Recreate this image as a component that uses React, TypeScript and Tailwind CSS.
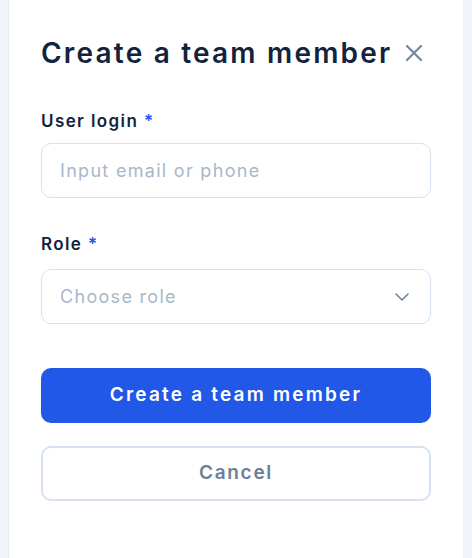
import React from "react";

export default function App() {
  return (
    <div className="w-[472px] h-[558px] bg-[#f1f4f8] flex" style={{ fontFamily: "Inter, 'Noto Sans', sans-serif" }}>
      <div className="w-[8px] shrink-0 bg-[#f1f4f8]" />
      <div className="w-[455px] h-full bg-white border-l border-[#e3ebf7] flex flex-col px-[32px] pt-[34px]">
        <div className="flex items-center justify-between h-[38px]">
          <h1 className="text-[28px] leading-[38px] font-semibold text-[#13233c] tracking-[2.2px]">Create a team member</h1>
          <button className="w-[24px] h-[24px] flex items-center justify-center mr-[5px]">
            <svg width="18" height="18" viewBox="0 0 18 18" fill="none" stroke="#7188a3" strokeWidth="2.2" strokeLinecap="round">
              <path d="M2 2L16 16M16 2L2 16" />
            </svg>
          </button>
        </div>
        <label className="mt-[37px] text-[17px] leading-[24px] font-semibold text-[#13233c] tracking-[1.4px]">
          User login <span className="text-[#2158e8]">*</span>
        </label>
        <div className="mt-[10px] h-[55px] rounded-[10px] border border-[#d6e2ef] flex items-center px-[18px]">
          <span className="text-[18px] text-[#a7b8c9] tracking-[1.3px]">Input email or phone</span>
        </div>
        <label className="mt-[34px] text-[17px] leading-[24px] font-semibold text-[#13233c] tracking-[1.4px]">
          Role <span className="text-[#2158e8]">*</span>
        </label>
        <div className="mt-[13px] h-[55px] rounded-[10px] border border-[#d6e2ef] flex items-center justify-between pl-[18px] pr-[21px]">
          <span className="text-[18px] text-[#a7b8c9] tracking-[1.3px]">Choose role</span>
          <svg width="14" height="8" viewBox="0 0 14 8" fill="none" stroke="#6f84a0" strokeWidth="1.6" strokeLinecap="round" strokeLinejoin="round">
            <path d="M1 1L7 7L13 1" />
          </svg>
        </div>
        <button className="mt-[44px] h-[55px] rounded-[10px] bg-[#2158e8] text-white text-[19px] font-semibold tracking-[2.2px]">
          Create a team member
        </button>
        <button className="mt-[23px] h-[55px] rounded-[10px] border-2 border-[#d6e2ef] bg-white text-[#6b7f95] text-[19px] font-semibold tracking-[1.7px]">
          Cancel
        </button>
      </div>
    </div>
  );
}
